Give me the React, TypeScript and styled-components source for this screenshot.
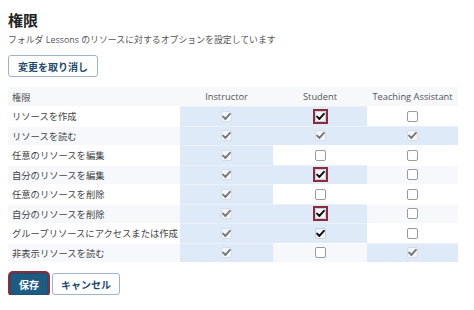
import React from 'react';
import styled, { createGlobalStyle } from 'styled-components';

const GlobalStyle = createGlobalStyle`
  html, body {
    margin: 0;
    padding: 0;
    background: #fff;
  }
  body {
    font-family: "Open Sans", "Noto Sans CJK JP", sans-serif;
    color: #333;
  }
`;

const Page = styled.div`
  padding: 10px 8px 0 8px;
  width: 450px;
`;

const Title = styled.h2`
  margin: 0;
  font-size: 15px;
  font-weight: 700;
  line-height: 20px;
  color: #222;
  font-family: "Noto Sans CJK JP", sans-serif;
`;

const Subtitle = styled.p`
  margin: 3px 0 0 0;
  font-size: 8.9px;
  line-height: 14px;
  color: #555;
`;

const Button = styled.button<{ primary?: boolean; focused?: boolean }>`
  font-family: "Noto Sans CJK JP", sans-serif;
  font-size: 10px;
  font-weight: 700;
  height: 22px;
  padding: 0 8px;
  border-radius: 3px;
  cursor: pointer;
  border: 1px solid ${({ primary }) => (primary ? '#1b5177' : '#9fb4c8')};
  background: ${({ primary }) => (primary ? '#1d5b83' : '#fff')};
  color: ${({ primary }) => (primary ? '#fff' : '#1d4a6e')};
  box-shadow: ${({ focused }) => (focused ? '0 0 0 2px #8c2b3a' : 'none')};
`;

const TopActions = styled.div`
  margin-top: 8px;
  display: flex;
  & > button {
    height: 22px;
    padding: 0 9px;
  }
`;

const Table = styled.table`
  margin-top: 10px;
  width: 450px;
  border-collapse: collapse;
  table-layout: fixed;
  font-size: 9.3px;
`;

const HeadCell = styled.th<{ first?: boolean }>`
  height: 19px;
  padding: 0 4px;
  font-weight: 400;
  color: #555;
  background: #f6f8fa;
  text-align: ${({ first }) => (first ? 'left' : 'center')};
  white-space: nowrap;
`;

const Row = styled.tr<{ alt?: boolean }>`
  background: ${({ alt }) => (alt ? '#f6f8fb' : '#fff')};
`;

const NameCell = styled.td`
  height: 18.5px;
  padding: 0 4px;
  color: #444;
  white-space: nowrap;
  border-top: 1px solid #fff;
`;

const BoxCell = styled.td<{ on?: boolean }>`
  height: 18.5px;
  padding: 0;
  text-align: center;
  vertical-align: middle;
  background: ${({ on }) => (on ? '#dfeaf8' : 'transparent')};
  border-top: 1px solid ${({ on }) => (on ? '#e8f0fa' : '#fff')};
`;

const Ring = styled.span<{ focused?: boolean }>`
  display: inline-flex;
  align-items: center;
  justify-content: center;
  width: 15px;
  height: 15px;
  box-sizing: border-box;
  border: 2px solid ${({ focused }) => (focused ? '#8c2b3a' : 'transparent')};
  vertical-align: middle;
`;

const Box = styled.span<{ checked?: boolean; disabled?: boolean }>`
  display: inline-flex;
  align-items: center;
  justify-content: center;
  width: 11px;
  height: 11px;
  box-sizing: border-box;
  border-radius: 2px;
  border: 1px solid ${({ checked, disabled }) =>
    checked ? (disabled ? '#d6dde6' : '#c8ced6') : '#9a9a9a'};
  background: ${({ checked }) => (checked ? '#f2f5f9' : '#fff')};
`;

const Check = ({ color }: { color: string }) => (
  <svg width="10" height="9" viewBox="0 0 10 9">
    <path d="M1.2 4.6 L3.8 7.2 L8.8 1.6" fill="none" stroke={color} strokeWidth="2.2" strokeLinecap="round" strokeLinejoin="round" />
  </svg>
);

type Cell = { v: boolean; d?: boolean; f?: boolean };

const CheckBox = ({ v, d, f }: Cell) => (
  <Ring focused={f}>
    <Box checked={v} disabled={d}>{v && <Check color={d ? '#7a7a7a' : '#111'} />}</Box>
  </Ring>
);

const rows: { name: string; cells: Cell[] }[] = [
  { name: 'リソースを作成', cells: [{ v: true, d: true }, { v: true, f: true }, { v: false }] },
  { name: 'リソースを読む', cells: [{ v: true, d: true }, { v: true, d: true }, { v: true, d: true }] },
  { name: '任意のリソースを編集', cells: [{ v: true, d: true }, { v: false }, { v: false }] },
  { name: '自分のリソースを編集', cells: [{ v: true, d: true }, { v: true, f: true }, { v: false }] },
  { name: '任意のリソースを削除', cells: [{ v: true, d: true }, { v: false }, { v: false }] },
  { name: '自分のリソースを削除', cells: [{ v: true, d: true }, { v: true, f: true }, { v: false }] },
  { name: 'グループリソースにアクセスまたは作成', cells: [{ v: true, d: true }, { v: true }, { v: false }] },
  { name: '非表示リソースを読む', cells: [{ v: true, d: true }, { v: false }, { v: true, d: true }] },
];

const BottomActions = styled.div`
  margin-top: 11px;
  display: flex;
  gap: 4px;
  padding-left: 2px;
`;

export default function App() {
  return (
    <Page>
      <GlobalStyle />
      <Title>権限</Title>
      <Subtitle>フォルダ Lessons のリソースに対するオプションを設定しています</Subtitle>
      <TopActions>
        <Button>変更を取り消し</Button>
      </TopActions>
      <Table>
        <colgroup>
          <col style={{ width: 172 }} />
          <col style={{ width: 93 }} />
          <col style={{ width: 94 }} />
          <col style={{ width: 91 }} />
        </colgroup>
        <thead>
          <tr>
            <HeadCell first>権限</HeadCell>
            <HeadCell>Instructor</HeadCell>
            <HeadCell>Student</HeadCell>
            <HeadCell>Teaching Assistant</HeadCell>
          </tr>
        </thead>
        <tbody>
          {rows.map((r, i) => (
            <Row key={r.name} alt={i % 2 === 1}>
              <NameCell>{r.name}</NameCell>
              {r.cells.map((c, j) => (
                <BoxCell key={j} on={j === 0 || c.v}>
                  <CheckBox {...c} />
                </BoxCell>
              ))}
            </Row>
          ))}
        </tbody>
      </Table>
      <BottomActions>
        <Button primary focused>保存</Button>
        <Button>キャンセル</Button>
      </BottomActions>
    </Page>
  );
}
